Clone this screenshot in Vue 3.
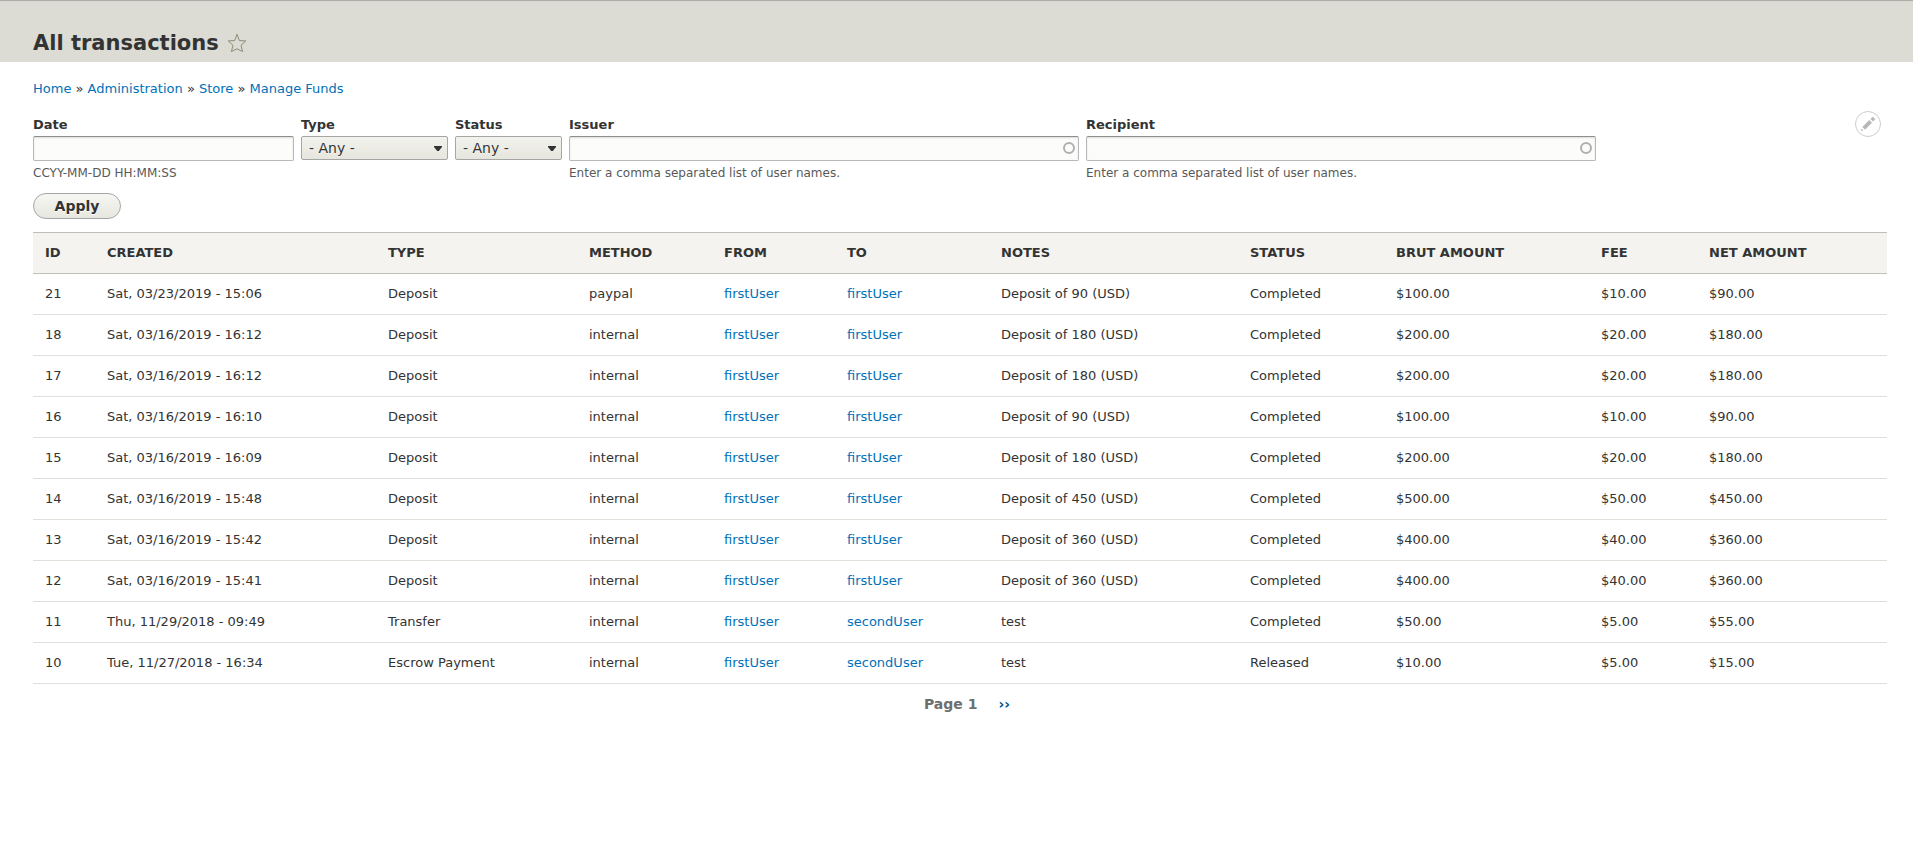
<script setup>
import { ref } from 'vue'

const crumbs = ['Home', 'Administration', 'Store', 'Manage Funds']

// `share` is each column's relative part of the table width.
const columns = [
  { key: 'id', label: 'ID', share: 62 },
  { key: 'created', label: 'Created', share: 281 },
  { key: 'type', label: 'Type', share: 201 },
  { key: 'method', label: 'Method', share: 135 },
  { key: 'from', label: 'From', share: 123, link: true },
  { key: 'to', label: 'To', share: 154, link: true },
  { key: 'notes', label: 'Notes', share: 249 },
  { key: 'status', label: 'Status', share: 146 },
  { key: 'brut', label: 'Brut amount', share: 205 },
  { key: 'fee', label: 'Fee', share: 108 },
  { key: 'net', label: 'Net amount', share: 190 },
]
const totalShare = columns.reduce((sum, c) => sum + c.share, 0)

const keys = columns.map((c) => c.key)
const rows = [
  [21, 'Sat, 03/23/2019 - 15:06', 'Deposit', 'paypal', 'firstUser', 'firstUser', 'Deposit of 90 (USD)', 'Completed', '$100.00', '$10.00', '$90.00'],
  [18, 'Sat, 03/16/2019 - 16:12', 'Deposit', 'internal', 'firstUser', 'firstUser', 'Deposit of 180 (USD)', 'Completed', '$200.00', '$20.00', '$180.00'],
  [17, 'Sat, 03/16/2019 - 16:12', 'Deposit', 'internal', 'firstUser', 'firstUser', 'Deposit of 180 (USD)', 'Completed', '$200.00', '$20.00', '$180.00'],
  [16, 'Sat, 03/16/2019 - 16:10', 'Deposit', 'internal', 'firstUser', 'firstUser', 'Deposit of 90 (USD)', 'Completed', '$100.00', '$10.00', '$90.00'],
  [15, 'Sat, 03/16/2019 - 16:09', 'Deposit', 'internal', 'firstUser', 'firstUser', 'Deposit of 180 (USD)', 'Completed', '$200.00', '$20.00', '$180.00'],
  [14, 'Sat, 03/16/2019 - 15:48', 'Deposit', 'internal', 'firstUser', 'firstUser', 'Deposit of 450 (USD)', 'Completed', '$500.00', '$50.00', '$450.00'],
  [13, 'Sat, 03/16/2019 - 15:42', 'Deposit', 'internal', 'firstUser', 'firstUser', 'Deposit of 360 (USD)', 'Completed', '$400.00', '$40.00', '$360.00'],
  [12, 'Sat, 03/16/2019 - 15:41', 'Deposit', 'internal', 'firstUser', 'firstUser', 'Deposit of 360 (USD)', 'Completed', '$400.00', '$40.00', '$360.00'],
  [11, 'Thu, 11/29/2018 - 09:49', 'Transfer', 'internal', 'firstUser', 'secondUser', 'test', 'Completed', '$50.00', '$5.00', '$55.00'],
  [10, 'Tue, 11/27/2018 - 16:34', 'Escrow Payment', 'internal', 'firstUser', 'secondUser', 'test', 'Released', '$10.00', '$5.00', '$15.00'],
].map((values) => Object.fromEntries(values.map((v, i) => [keys[i], v])))

const date = ref('')
const type = ref('any')
const status = ref('any')
const issuer = ref('')
const recipient = ref('')
</script>

<template>
  <div class="page">
    <header class="page-header">
      <h1>All transactions</h1>
      <a class="shortcut" href="#" aria-label="Add to shortcuts">
        <svg width="20" height="20" viewBox="0 0 20 20" fill="none" stroke="#8c8c78" stroke-width="1" stroke-linejoin="round">
          <path d="M10 1.3 L12.4 7.6 L18.8 7.9 L14 12.3 L15.6 18.6 L10 15.8 L4.4 18.6 L6 12.3 L1.2 7.9 L7.6 7.6 Z" />
        </svg>
      </a>
    </header>

    <main class="content">
      <nav class="breadcrumb" aria-label="Breadcrumb">
        <template v-for="(crumb, i) in crumbs" :key="crumb">
          <span v-if="i"> » </span><a href="#">{{ crumb }}</a>
        </template>
      </nav>

      <form class="filters" @submit.prevent>
        <div class="fields">
          <div class="field field-date">
            <label for="date">Date</label>
            <input id="date" v-model="date" type="text">
            <p class="description">CCYY-MM-DD HH:MM:SS</p>
          </div>
          <div class="field field-type">
            <label for="type">Type</label>
            <div class="control">
              <select id="type" v-model="type"><option value="any">- Any -</option></select>
              <svg class="arrow" width="10" height="6" viewBox="0 0 10 6"><path d="M1 0 H9 V1 L5.8 5 H4.2 L1 1 Z" fill="#333" /></svg>
            </div>
          </div>
          <div class="field field-status">
            <label for="status">Status</label>
            <div class="control">
              <select id="status" v-model="status"><option value="any">- Any -</option></select>
              <svg class="arrow" width="10" height="6" viewBox="0 0 10 6"><path d="M1 0 H9 V1 L5.8 5 H4.2 L1 1 Z" fill="#333" /></svg>
            </div>
          </div>
          <div class="field field-user">
            <label for="issuer">Issuer</label>
            <div class="control">
              <input id="issuer" v-model="issuer" type="text">
              <svg class="throbber" width="12" height="12" viewBox="0 0 12 12"><circle cx="6" cy="6" r="5" fill="none" stroke="#b0b0ae" stroke-width="2" /></svg>
            </div>
            <p class="description">Enter a comma separated list of user names.</p>
          </div>
          <div class="field field-user">
            <label for="recipient">Recipient</label>
            <div class="control">
              <input id="recipient" v-model="recipient" type="text">
              <svg class="throbber" width="12" height="12" viewBox="0 0 12 12"><circle cx="6" cy="6" r="5" fill="none" stroke="#b0b0ae" stroke-width="2" /></svg>
            </div>
            <p class="description">Enter a comma separated list of user names.</p>
          </div>
          <button class="contextual" type="button" aria-label="Open configuration options">
            <svg width="16" height="16" viewBox="0 0 16 16" fill="#b8b8b8">
              <path d="M9.2 4 L12 6.8 L5.1 13.7 L2.3 10.9 Z M10.5 2.9 L12.2 1.2 Q12.8 0.8 13.4 1.2 L14.8 2.6 Q15.2 3.2 14.8 3.8 L13.1 5.5 Z M1.6 12.6 L3.4 14.4 L1 15 Z" />
            </svg>
          </button>
        </div>
        <button class="apply" type="submit">Apply</button>
      </form>

      <table>
        <colgroup>
          <col v-for="col in columns" :key="col.key" :style="{ width: (col.share / totalShare) * 100 + '%' }">
        </colgroup>
        <thead>
          <tr><th v-for="col in columns" :key="col.key" scope="col">{{ col.label }}</th></tr>
        </thead>
        <tbody>
          <tr v-for="row in rows" :key="row.id">
            <td v-for="col in columns" :key="col.key">
              <a v-if="col.link" href="#">{{ row[col.key] }}</a>
              <template v-else>{{ row[col.key] }}</template>
            </td>
          </tr>
        </tbody>
      </table>

      <nav class="pager" aria-label="Pagination">
        <span>Page 1</span>
        <a href="#" aria-label="Next page">››</a>
      </nav>
    </main>
  </div>
</template>

<style>
body {
  background: #fff;
}
</style>

<style scoped>
.page {
  color: #333;
  font: 13px/20px "DejaVu Sans", sans-serif;
}
a {
  color: #0071b8;
  text-decoration: none;
}
.page-header {
  display: flex;
  align-items: center;
  gap: 8px;
  padding: 28px 33px 4px;
  background: #dcdcd4;
  box-shadow: inset 0 2px 1px -1px #a9a9a3;
}
h1 {
  margin: 0;
  font-size: 21px;
  line-height: 30px;
}
.shortcut {
  display: flex;
}
.content {
  padding: 17px 26px 0 33px;
}
.breadcrumb {
  padding-bottom: 15px;
}
.fields {
  display: flex;
  gap: 7px;
}
.field label {
  display: block;
  font-weight: bold;
  line-height: 22px;
}
.field-date {
  width: 261px;
}
.field-type {
  width: 147px;
}
.field-status {
  width: 107px;
}
.field-user {
  width: 510px;
}
.control {
  position: relative;
}
input,
select {
  box-sizing: border-box;
  display: block;
  width: 100%;
  margin: 0;
  border: 1px solid #a6a6a6;
  border-radius: 2px;
  color: #333;
  font: 14px/20px "DejaVu Sans", sans-serif;
}
input {
  height: 25px;
  padding: 2px 7px;
  border-color: #8e8e8e #b8b8b8 #b8b8b8;
  background: #fcfcfa;
  box-shadow: inset 0 1px 2px rgba(0, 0, 0, 0.13);
}
select {
  height: 24px;
  padding: 0 28px 0 7px;
  appearance: none;
  background: linear-gradient(#f3f3ee, #e6e6de);
  text-shadow: 0 1px rgba(255, 255, 255, 0.6);
}
.arrow,
.throbber {
  position: absolute;
  pointer-events: none;
}
.arrow {
  top: 10px;
  right: 5px;
}
.throbber {
  top: 6px;
  right: 4px;
}
.description {
  margin: 2px 0 0;
  color: #595959;
  font-size: 12px;
}
.contextual {
  display: flex;
  align-items: center;
  justify-content: center;
  width: 26px;
  height: 26px;
  margin: -3px 6px 0 auto;
  padding: 0;
  border: 1px solid #ccc;
  border-radius: 13px;
  background: #fff;
}
.apply {
  display: block;
  width: 88px;
  height: 26px;
  margin: 10px 0 13px;
  padding: 0;
  border: 1px solid #a6a6a6;
  border-radius: 13px;
  background: linear-gradient(#f6f6f3, #e7e7df);
  color: #333;
  font: bold 14px/20px "DejaVu Sans", sans-serif;
  text-shadow: 0 1px #fff;
}
table {
  width: 100%;
  table-layout: fixed;
  border-collapse: collapse;
}
th,
td {
  height: 40px;
  padding: 0 12px;
  text-align: left;
}
th {
  border-top: 1px solid #bebfb9;
  border-bottom: 1px solid #bebfb9;
  background: #f4f3ef;
  text-transform: uppercase;
}
td {
  border-bottom: 1px solid #e0e0da;
}
.pager {
  display: flex;
  justify-content: center;
  gap: 21px;
  padding: 10px 0 0 14px;
  color: #6e6e6e;
  font-size: 14px;
  font-weight: bold;
}
.pager a {
  color: #004f80;
}
</style>
